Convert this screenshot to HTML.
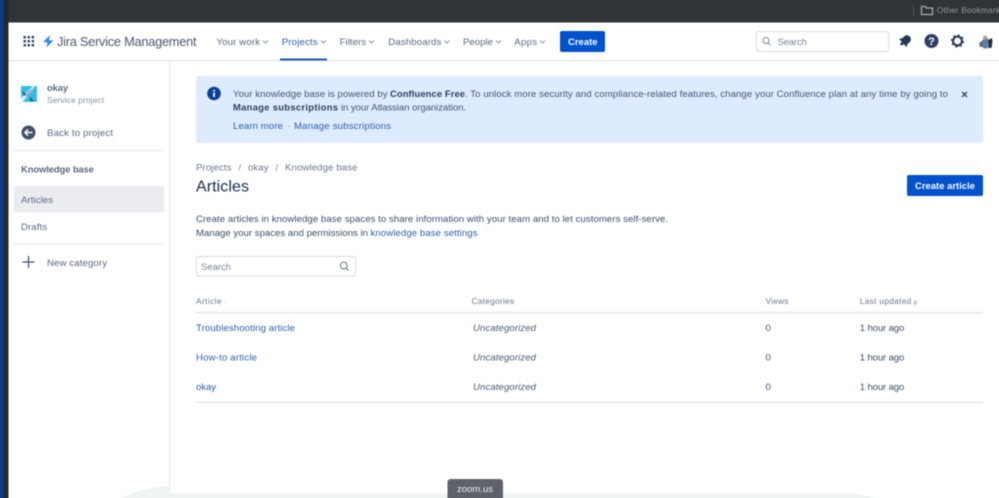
<!DOCTYPE html>
<html><head><meta charset="utf-8"><title>Articles</title>
<style>
html,body{margin:0;padding:0;width:999px;height:498px;overflow:hidden;background:#fff}
svg{display:block;overflow:visible;filter:blur(.5px)}
text{font-family:"Liberation Sans",sans-serif;font-size:9.6px;fill:#42526e}
.n{font-size:9.6px;fill:#5a6880}
.b{font-weight:bold;font-size:9.4px}
.l{fill:#2f5fae;font-size:9.6px}
.h{fill:#6b778c;font-size:8.3px}
.i{font-style:italic;fill:#4a5872;font-size:9.6px}
</style></head><body>
<svg width="999" height="498" viewBox="0 0 999 498" xmlns="http://www.w3.org/2000/svg">
<rect x="-6" y="-6" width="1012" height="510" fill="#fff"/>
<!-- left desktop strip -->
<rect x="-6" y="-6" width="9.500" height="510" fill="#0a3c8e"/>
<rect x="3.500" y="-6" width="5" height="510" fill="#24272b"/>
<!-- top browser bar -->
<rect x="8.500" y="-6" width="998" height="28.500" fill="#303338"/>
<rect x="913" y="5" width="1" height="11" fill="#54585d"/>
<path d="M921.500 6.500h4l1 1.500h6v6.500h-11z" fill="none" stroke="#a6aaae" stroke-width="1.300"/>
<text x="937" y="13" textLength="63" lengthAdjust="spacing" style="fill:#94989d;font-size:8.300px">Other Bookmark</text>
<!-- nav -->
<rect x="8.500" y="60" width="998" height="1.300" fill="#e3e5e9"/>
<g fill="#344563">
<rect x="23.500" y="36" width="2.400" height="2.400"/><rect x="27.600" y="36" width="2.400" height="2.400"/><rect x="31.700" y="36" width="2.400" height="2.400"/>
<rect x="23.500" y="40" width="2.400" height="2.400"/><rect x="27.600" y="40" width="2.400" height="2.400"/><rect x="31.700" y="40" width="2.400" height="2.400"/>
<rect x="23.500" y="44" width="2.400" height="2.400"/><rect x="27.600" y="44" width="2.400" height="2.400"/><rect x="31.700" y="44" width="2.400" height="2.400"/>
</g>
<path d="M50 35 43.200 42.300H47.500L46.500 47.500 53.300 40.400H48.800z" fill="#2684ff"/>
<text x="57" y="46" textLength="139.500" lengthAdjust="spacing" style="font-size:12.800px;fill:#4a586f">Jira Service Management</text>
<text class="n" x="216.500" y="45" textLength="43.500">Your work</text>
<text class="n" x="281.700" y="45" textLength="36" style="fill:#2f5ba6">Projects</text>
<text class="n" x="339.600" y="45" textLength="26.500">Filters</text>
<text class="n" x="388.300" y="45" textLength="53">Dashboards</text>
<text class="n" x="463" y="45" textLength="30">People</text>
<text class="n" x="514.300" y="45" textLength="22.700">Apps</text>
<g fill="none" stroke="#8a95a6" stroke-width="1">
<path d="M263 40.500l2.500 2.500 2.500-2.500"/><path d="M321 40.500l2.500 2.500 2.500-2.500" stroke="#7f97c0"/><path d="M369 40.500l2.500 2.500 2.500-2.500"/><path d="M444.500 40.500l2.500 2.500 2.500-2.500"/><path d="M496 40.500l2.500 2.500 2.500-2.500"/><path d="M540 40.500l2.500 2.500 2.500-2.500"/>
</g>
<rect x="280" y="58.500" width="47" height="2" fill="#1f55a8"/>
<rect x="560" y="31" width="45" height="21" rx="2" fill="#0052cc"/>
<text class="b" x="568" y="45" textLength="29.500" style="fill:#fff">Create</text>
<rect x="756.500" y="31.500" width="132" height="20" rx="2.500" fill="#fff" stroke="#dfe1e6" stroke-width="1.200"/>
<circle cx="766" cy="40.500" r="3" fill="none" stroke="#7a869a" stroke-width="1"/><path d="M768.200 42.800l2.300 2.400" stroke="#7a869a" stroke-width="1"/>
<text x="777.500" y="45" textLength="29.500" style="fill:#7a869a">Search</text>
<!-- bell, tilted -->
<g transform="rotate(48 905 41)" fill="#243757">
<path d="M905 34.500c-2.800 0-4 2.200-4 4.500v2.500l-1.700 2.500h11.400L909 41.500V39c0-2.300-1.200-4.500-4-4.500z"/>
<circle cx="905" cy="45.300" r="1.500"/>
</g>
<circle cx="931.500" cy="41" r="7" fill="#2c4068"/>
<text x="931.500" y="45" text-anchor="middle" style="fill:#fff;font-size:11px;font-weight:bold">?</text>
<circle cx="957.500" cy="41" r="4.400" fill="none" stroke="#253858" stroke-width="2"/>
<circle cx="957.500" cy="41" r="6" fill="none" stroke="#253858" stroke-width="1.200" stroke-dasharray="2.200 2.500"/>
<path d="M979 43l4-3 1 7-4 0z" fill="#606a78"/><rect x="983" y="37.500" width="5" height="11" rx="1.500" fill="#5a7fb0"/><circle cx="985" cy="37.500" r="2" fill="#c99a80"/><path d="M988 40l4-2 .5 4-1 6h-3z" fill="#2c2e33"/>
<!-- sidebar -->
<rect x="169" y="61" width="1.300" height="445" fill="#eceef1"/>
<rect x="21" y="86" width="16" height="16" fill="#33bde0"/>
<path d="M21 98 33 86h2L23 102h-2z" fill="#d8f0f5"/><path d="M25 95l6-6 2 2-6 6z" fill="#8fb0d0"/><path d="M22 91l4 3-2 2zM30 97l4 4h-4z" fill="#34507a"/>
<text class="b" x="47" y="91" textLength="21" style="fill:#5a6880;font-size:9.300px">okay</text>
<text x="47" y="103" textLength="57" style="fill:#8590a2;font-size:8.300px">Service project</text>
<circle cx="28.500" cy="132.500" r="7" fill="#42526e"/>
<path d="M32.500 132.500h-7M28 129.500l-3 3 3 3" fill="none" stroke="#fff" stroke-width="1.500"/>
<text x="47" y="136" textLength="66" style="fill:#5a6880">Back to project</text>
<rect x="14" y="150" width="149.500" height="1.200" fill="#ebecf0"/>
<text class="b" x="21" y="172.500" textLength="73" style="fill:#5a6880">Knowledge base</text>
<rect x="14" y="186" width="150" height="26.500" rx="2" fill="#ebecf0"/>
<text x="21" y="203" textLength="32" style="fill:#5a6880">Articles</text>
<text x="21" y="230" textLength="26" style="fill:#5a6880">Drafts</text>
<rect x="14" y="243.500" width="149.500" height="1.200" fill="#ebecf0"/>
<path d="M28.500 256v12M22.500 262h12" stroke="#42526e" stroke-width="1.200"/>
<text x="47" y="266" textLength="60" style="fill:#5a6880">New category</text>
<!-- banner -->
<rect x="196" y="76" width="787" height="67" rx="3" fill="#deebff"/>
<circle cx="214" cy="93.500" r="6.800" fill="#0b3f96"/>
<rect x="213.200" y="92.500" width="1.700" height="4.500" fill="#fff"/><rect x="213.200" y="89.800" width="1.700" height="1.700" fill="#fff"/>
<text x="233" y="97" textLength="154.500" style="fill:#46556e">Your knowledge base is powered by</text>
<text class="b" x="390" y="97" textLength="75" style="fill:#2e3f5c">Confluence Free</text>
<text x="465" y="97" textLength="483" style="fill:#46556e">. To unlock more security and compliance-related features, change your Confluence plan at any time by going to</text>
<text class="b" x="233" y="110.500" textLength="105" style="fill:#2e3f5c">Manage subscriptions</text>
<text x="341" y="110.500" textLength="125" style="fill:#46556e">in your Atlassian organization.</text>
<path d="M962 92l5 5M967 92l-5 5" stroke="#344563" stroke-width="1.300"/>
<text class="l" x="233" y="129" textLength="50">Learn more</text>
<text x="287" y="129" style="fill:#6b778c">·</text>
<text class="l" x="294" y="129" textLength="97">Manage subscriptions</text>
<!-- header -->
<text x="196" y="170.500" textLength="35.500" style="fill:#6b778c">Projects</text>
<text x="238.500" y="170.500" style="fill:#7a869a">/</text>
<text x="248" y="170.500" textLength="20.500" style="fill:#6b778c">okay</text>
<text x="275.500" y="170.500" style="fill:#7a869a">/</text>
<text x="285" y="170.500" textLength="72.500" style="fill:#6b778c">Knowledge base</text>
<text x="196" y="191.500" textLength="53" style="fill:#172b4d;font-size:16px">Articles</text>
<rect x="907" y="175" width="76" height="21" rx="2" fill="#0052cc"/>
<text class="b" x="915" y="189" textLength="60" style="fill:#fff">Create article</text>
<text x="196" y="222" textLength="472" style="fill:#3f4e68">Create articles in knowledge base spaces to share information with your team and to let customers self-serve.</text>
<text x="196" y="236" textLength="172" style="fill:#3f4e68">Manage your spaces and permissions in</text>
<text class="l" x="370.500" y="236" textLength="107">knowledge base settings</text>
<!-- search -->
<rect x="196.500" y="256.500" width="159" height="19.500" rx="1.500" fill="#fff" stroke="#dfe1e6" stroke-width="1.200"/>
<text x="201" y="270" textLength="30" style="fill:#7a869a">Search</text>
<circle cx="343.800" cy="265.500" r="3.400" fill="none" stroke="#6b778c" stroke-width="1"/><path d="M346.300 268l2.300 2.400" stroke="#6b778c" stroke-width="1"/>
<!-- table -->
<text class="h" x="196" y="304" textLength="25.500">Article</text>
<path d="M224 300.500h2.500M224 302.500h2.500" stroke="#dfe1e6" stroke-width=".8"/>
<text class="h" x="471.500" y="304" textLength="42.500">Categories</text>
<text class="h" x="765.500" y="304" textLength="23">Views</text>
<text class="h" x="859.800" y="304" textLength="51.500">Last updated</text>
<path d="M913.500 301.500h3.500M914 303l1.200 1.200L916.500 303" stroke="#7a869a" stroke-width=".8" fill="none"/>
<rect x="196" y="312" width="787" height="1.200" fill="#dfe1e6"/>
<text class="l" x="196" y="331" textLength="99">Troubleshooting article</text>
<text class="i" x="473" y="331" textLength="63">Uncategorized</text>
<text x="765.500" y="331" style="fill:#3f4e68">0</text>
<text x="859.800" y="331" textLength="44.500" style="fill:#3f4e68">1 hour ago</text>
<text class="l" x="196" y="360.500" textLength="61">How-to article</text>
<text class="i" x="473" y="360.500" textLength="63">Uncategorized</text>
<text x="765.500" y="360.500" style="fill:#3f4e68">0</text>
<text x="859.800" y="360.500" textLength="44.500" style="fill:#3f4e68">1 hour ago</text>
<text class="l" x="196" y="390" textLength="20">okay</text>
<text class="i" x="473" y="390" textLength="63">Uncategorized</text>
<text x="765.500" y="390" style="fill:#3f4e68">0</text>
<text x="859.800" y="390" textLength="44.500" style="fill:#3f4e68">1 hour ago</text>
<rect x="196" y="401.800" width="787" height="1.200" fill="#dfe1e6"/>
<!-- bottom strip and tooltip -->
<path d="M112 504C125 494 150 486 169 486V493H840C860 493 875 497 885 504Z" fill="#f1f4f4"/>
<rect x="447.500" y="479" width="55.500" height="25" rx="3" fill="#5f6369"/>
<text x="457" y="492" textLength="36" style="fill:#eceef0;font-size:9.600px">zoom.us</text>
</svg>
</body></html>
